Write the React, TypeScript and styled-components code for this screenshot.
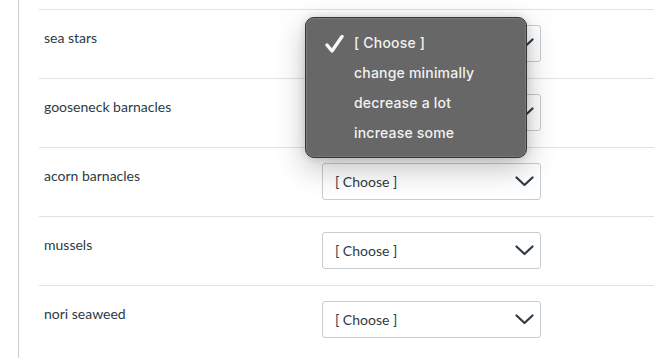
import React from 'react';
import styled, { createGlobalStyle } from 'styled-components';

const GlobalStyle = createGlobalStyle`
  html, body {
    margin: 0;
    padding: 0;
    background: #ffffff;
  }
  body {
    font-family: Lato, 'Liberation Sans', sans-serif;
    color: #2d3b45;
  }
`;

const Screen = styled.div`
  position: relative;
  width: 654px;
  height: 358px;
  overflow: hidden;
`;

const Question = styled.div`
  margin-left: 18px;
  border-left: 1px solid #c7cdd1;
  padding: 9px 0 0 20px;
  height: 349px;
`;

const Row = styled.div`
  display: grid;
  grid-template-columns: 283px 219px;
  height: 68px;
  border-top: 1px solid #dfe2e5;
`;

const Label = styled.div`
  padding: 19px 0 0 5px;
  font-size: 14px;
  line-height: 18px;
  color: #2d3b45;
`;

const Select = styled.div`
  box-sizing: border-box;
  margin-top: 15px;
  height: 37px;
  border: 1px solid #c7cdd1;
  border-radius: 3px;
  background: #fff;
  display: flex;
  align-items: center;
  justify-content: space-between;
  padding: 0 6px 0 12px;
  font-size: 14px;
  color: #2d3b45;

  svg {
    flex: none;
  }
`;

const Menu = styled.div`
  position: absolute;
  left: 305px;
  top: 17px;
  width: 222px;
  height: 141px;
  box-sizing: border-box;
  padding-top: 10px;
  background: #676767;
  border: 1px solid #363636;
  border-radius: 9px;
  box-shadow:
    inset 0 0 0 1px rgba(255, 255, 255, 0.12),
    0 10px 30px rgba(0, 0, 0, 0.25),
    0 0 8px rgba(0, 0, 0, 0.14);
  font-family: Inter, 'Liberation Sans', sans-serif;
`;

const MenuItem = styled.div`
  position: relative;
  height: 30px;
  line-height: 30px;
  padding-left: 48px;
  font-size: 14px;
  font-weight: 500;
  color: #f2f2f2;
  letter-spacing: 0.2px;

  svg {
    position: absolute;
    left: 19px;
    top: 7px;
  }
`;

const Chevron = () => (
  <svg width="19" height="11" viewBox="0 0 19 11">
    <path d="M1.5 1.5 L9.5 9 L17.5 1.5" fill="none" stroke="#2d3b45" strokeWidth="2.2" strokeLinecap="round" strokeLinejoin="round" />
  </svg>
);

const Check = () => (
  <svg width="19" height="18" viewBox="0 0 19 18">
    <path d="M2 10 L7 16 L17 1.5" fill="none" stroke="#f7f7f7" strokeWidth="3.4" strokeLinecap="round" strokeLinejoin="round" />
  </svg>
);

const items = ['sea stars', 'gooseneck barnacles', 'acorn barnacles', 'mussels', 'nori seaweed'];
const options = ['[ Choose ]', 'change minimally', 'decrease a lot', 'increase some'];

export default function App() {
  return (
    <Screen>
      <GlobalStyle />
      <Question>
        {items.map((name) => (
          <Row key={name}>
            <Label>{name}</Label>
            <Select>
              <span>[ Choose ]</span>
              <Chevron />
            </Select>
          </Row>
        ))}
      </Question>
      <Menu>
        {options.map((opt, i) => (
          <MenuItem key={opt}>
            {i === 0 && <Check />}
            {opt}
          </MenuItem>
        ))}
      </Menu>
    </Screen>
  );
}
